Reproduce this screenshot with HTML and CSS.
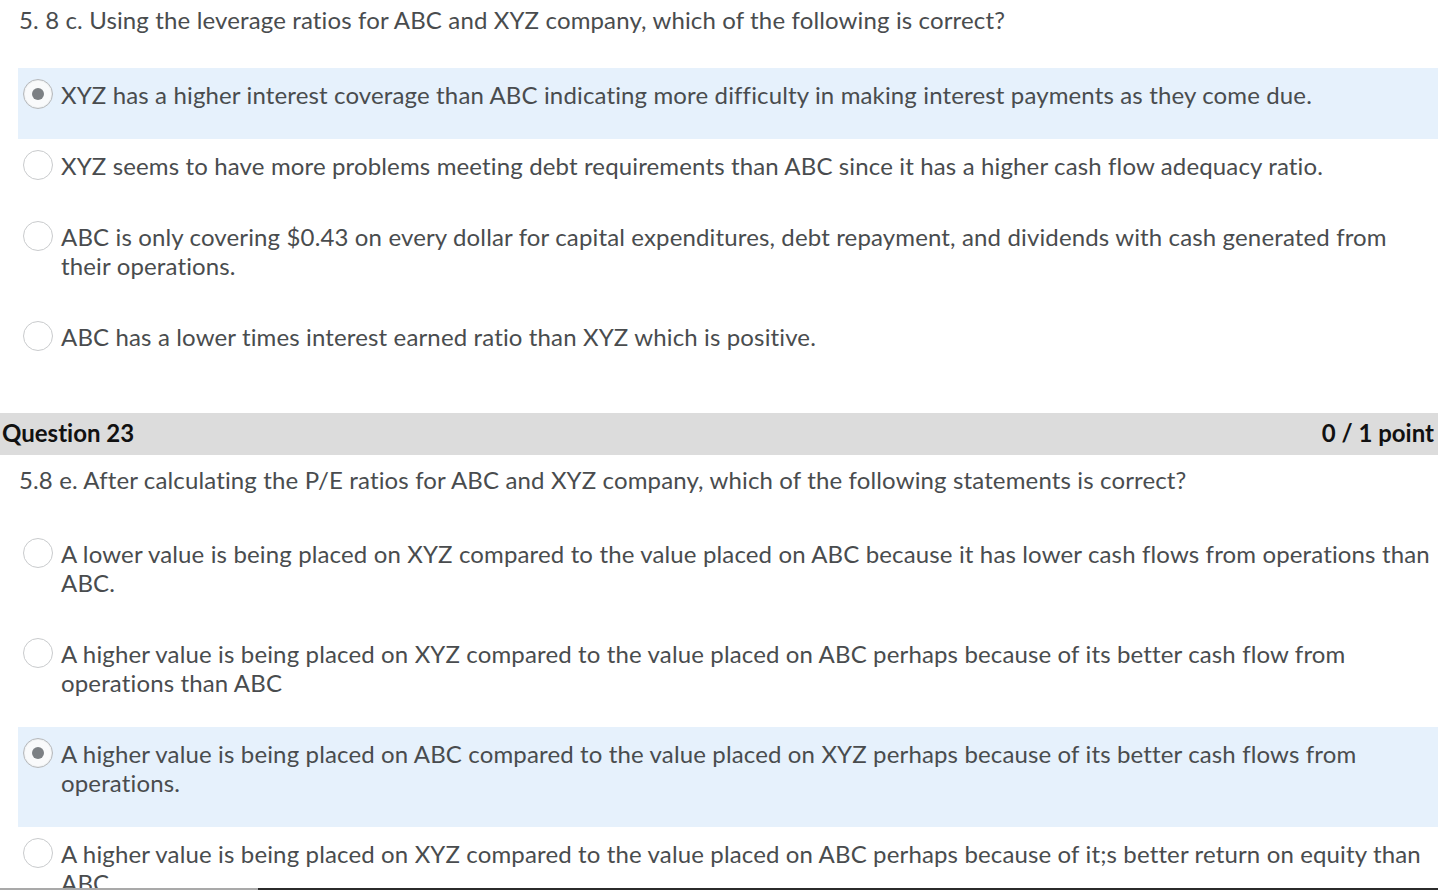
FILE: index.html
```
<!DOCTYPE html>
<html>
<head>
<meta charset="utf-8">
<link rel="stylesheet" href="styles.css">
</head>
<body>
<div class="page">
  <section class="question">
    <p class="q-text">5. 8 c. Using the leverage ratios for ABC and XYZ company, which of the following is correct?</p>
    <ul class="options">
      <li class="option selected"><span class="radio"></span><span class="label">XYZ has a higher interest coverage than ABC indicating more difficulty in making interest payments as they come due.</span></li>
      <li class="option"><span class="radio"></span><span class="label">XYZ seems to have more problems meeting debt requirements than ABC since it has a higher cash flow adequacy ratio.</span></li>
      <li class="option"><span class="radio"></span><span class="label">ABC is only covering $0.43 on every dollar for capital expenditures, debt repayment, and dividends with cash generated from their operations.</span></li>
      <li class="option"><span class="radio"></span><span class="label">ABC has a lower times interest earned ratio than XYZ which is positive.</span></li>
    </ul>
  </section>
  <div class="q-header"><span class="q-title">Question 23</span><span class="q-points">0 / 1 point</span></div>
  <section class="question">
    <p class="q-text q-text2">5.8 e. After calculating the P/E ratios for ABC and XYZ company, which of the following statements is correct?</p>
    <ul class="options">
      <li class="option"><span class="radio"></span><span class="label">A lower value is being placed on XYZ compared to the value placed on ABC because it has lower cash flows from operations than ABC.</span></li>
      <li class="option"><span class="radio"></span><span class="label">A higher value is being placed on XYZ compared to the value placed on ABC perhaps because of its better cash flow from operations than ABC</span></li>
      <li class="option selected"><span class="radio"></span><span class="label">A higher value is being placed on ABC compared to the value placed on XYZ perhaps because of its better cash flows from operations.</span></li>
      <li class="option"><span class="radio"></span><span class="label">A higher value is being placed on XYZ compared to the value placed on ABC perhaps because of it;s better return on equity than ABC</span></li>
    </ul>
  </section>
</div>
<div class="bottom-strip"><span class="strip-a"></span><span class="strip-b"></span></div>
</body>
</html>
```
FILE: styles.css
```
html, body {
  margin: 0;
  padding: 0;
  background: #ffffff;
}
body {
  width: 1438px;
  height: 890px;
  overflow: hidden;
  position: relative;
  font-family: Lato, "Noto Sans", sans-serif;
  color: #494c4e;
  font-size: 24px;
  line-height: 29px;
  letter-spacing: 0.14px;
  font-variant-ligatures: none;
}
.page {
  display: flex;
  flex-direction: column;
}
.q-text {
  margin: 0;
  padding: 5px 0 0 19px;
  height: 68px;
  box-sizing: border-box;
}
.q-text2 {
  padding-top: 10px;
  height: 72px;
}
.options {
  list-style: none;
  margin: 0 0 0 18px;
  padding: 0;
}
.option {
  display: flex;
  align-items: flex-start;
  padding: 12px 8px 30px 5px;
}
.option.selected {
  background: #e6f1fc;
}
.radio {
  flex: none;
  width: 28px;
  height: 28px;
  border: 1px solid #c9cbcd;
  border-radius: 50%;
  background: #ffffff;
  margin: -1px 8px -1px 0;
  display: flex;
  align-items: center;
  justify-content: center;
  box-sizing: content-box;
}
.selected .radio {
  border-color: #b5b8bb;
  background: #f9fafb;
  box-shadow: inset 0 0 0 1px #eef0f1;
}
.selected .radio::after {
  content: "";
  width: 12px;
  height: 12px;
  border-radius: 50%;
  background: #7c8084;
}
.label {
  flex: 1;
}
.q-header {
  margin-top: 32px;
  height: 42px;
  box-sizing: border-box;
  background: #dcdcdc;
  display: flex;
  justify-content: space-between;
  align-items: center;
  padding: 0 4px 4px 2px;
  color: #111111;
  font-weight: 700;
  letter-spacing: 0;
}
.bottom-strip {
  position: absolute;
  left: 0;
  bottom: 0;
  width: 1438px;
  height: 2px;
  display: flex;
}
.strip-a {
  width: 258px;
  background: #a9a9a9;
}
.strip-b {
  flex: 1;
  background: #2b2b2b;
}
```
